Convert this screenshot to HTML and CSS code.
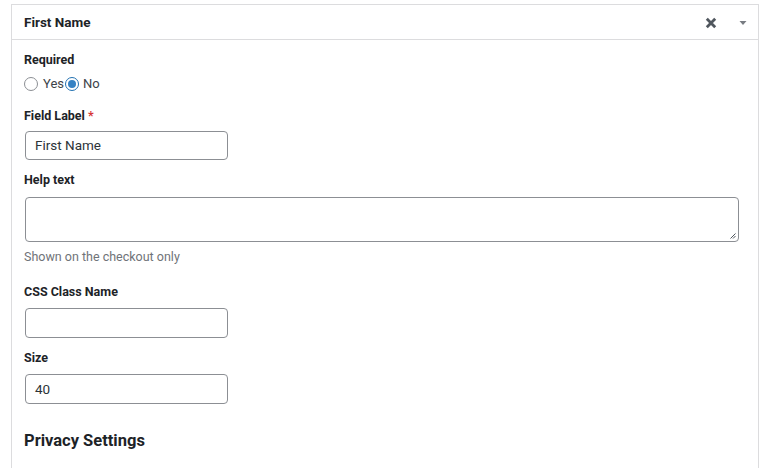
FILE: index.html
```html
<!DOCTYPE html>
<html>
<head>
<meta charset="utf-8">
<link rel="stylesheet" href="styles.css">
</head>
<body>
<div class="panel">
  <div class="panel-head">
    <span class="panel-title">First Name</span>
    <span class="head-actions">
      <svg class="icon-x" width="12" height="12" viewBox="0 0 12 12"><path d="M1.8 1.8 L10.2 10.2 M10.2 1.8 L1.8 10.2" stroke="#50575e" stroke-width="2.8" stroke-linecap="butt"/></svg>
      <svg class="icon-caret" width="8" height="6" viewBox="0 0 8 6"><path d="M0.5 1 L7.5 1 L4 5 Z" fill="#787c82"/></svg>
    </span>
  </div>
  <div class="panel-body">
    <div class="label l-required">Required</div>
    <div class="radios">
      <span class="radio"></span><span class="radio-text">Yes</span>
      <span class="radio checked"></span><span class="radio-text">No</span>
    </div>
    <div class="label l-field">Field Label <span class="req">*</span></div>
    <div class="input i-first">First Name</div>
    <div class="label l-help">Help text</div>
    <div class="textarea"><svg class="grip" width="6" height="6" viewBox="0 0 6 6"><path d="M5.5 0.5 L0.5 5.5 M5.5 3 L3 5.5" stroke="#50575e" stroke-width="1"/></svg></div>
    <div class="hint">Shown on the checkout only</div>
    <div class="label l-css">CSS Class Name</div>
    <div class="input i-css"></div>
    <div class="label l-size">Size</div>
    <div class="input i-size">40</div>
    <div class="section-title">Privacy Settings</div>
  </div>
</div>
</body>
</html>
```

FILE: styles.css
```css
html, body {
  margin: 0;
  padding: 0;
  background: #fff;
  font-family: Roboto, "Liberation Sans", Arial, sans-serif;
  color: #1d2327;
}
.panel {
  margin: 4px 9px 0 11px;
  border: 1px solid #dcdcde;
  border-bottom: none;
  height: 470px;
  box-sizing: border-box;
}
.panel-head {
  height: 34px;
  border-bottom: 1px solid #dcdcde;
  display: flex;
  align-items: center;
  justify-content: space-between;
  padding: 0 11px 0 12px;
}
.panel-title {
  font-size: 13.5px;
  font-weight: 700;
  color: #1d2327;
}
.head-actions {
  display: flex;
  align-items: center;
  gap: 22px;
}
.icon-x { display: block; margin-top: 1px; }
.icon-caret { display: block; margin-top: 2px; }
.panel-body {
  padding: 12px 19px 0 12px;
}
.label {
  font-size: 12.5px;
  font-weight: 700;
  line-height: 16px;
  height: 16px;
  color: #1d2327;
}
.req { color: #d63638; }
.radios {
  margin-top: 6px;
  height: 20px;
  display: flex;
  align-items: center;
  font-size: 13px;
  color: #3c434a;
}
.radio {
  width: 12px;
  height: 12px;
  border: 1px solid #8c8f94;
  border-radius: 50%;
  box-sizing: content-box;
  margin-left: 0;
  margin-right: 5px;
  position: relative;
  background: #fff;
  flex: none;
}
.radio.checked {
  border-color: #2271b1;
  margin-left: 1px;
  margin-right: 4px;
}
.radio.checked::after {
  content: "";
  position: absolute;
  left: 2px;
  top: 2px;
  width: 8px;
  height: 8px;
  border-radius: 50%;
  background: #3582c4;
}
.radio-text { line-height: 20px; }
.l-field { margin-top: 14px; }
.input {
  width: 203px;
  height: 29px;
  box-sizing: border-box;
  border: 1px solid #8c8f94;
  border-radius: 4px;
  margin-left: 1px;
  padding: 0 9px;
  font-size: 13.5px;
  line-height: 27px;
  color: #2c3338;
}
.i-first { margin-top: 7px; }
.l-help { margin-top: 12px; }
.textarea {
  margin-top: 9px;
  margin-left: 1px;
  height: 45px;
  border: 1px solid #8c8f94;
  border-radius: 4px;
  box-sizing: border-box;
  position: relative;
}
.grip {
  position: absolute;
  right: 2px;
  bottom: 2px;
}
.hint {
  margin-top: 7px;
  font-size: 12.5px;
  line-height: 16px;
  color: #6f7378;
}
.l-css { margin-top: 19px; }
.i-css { margin-top: 8px; height: 30px; }
.l-size { margin-top: 12px; }
.i-size { margin-top: 8px; height: 30px; line-height: 28px; }
.section-title {
  margin-top: 27px;
  font-size: 16.5px;
  font-weight: 700;
  line-height: 20px;
  color: #1d2327;
}
```
